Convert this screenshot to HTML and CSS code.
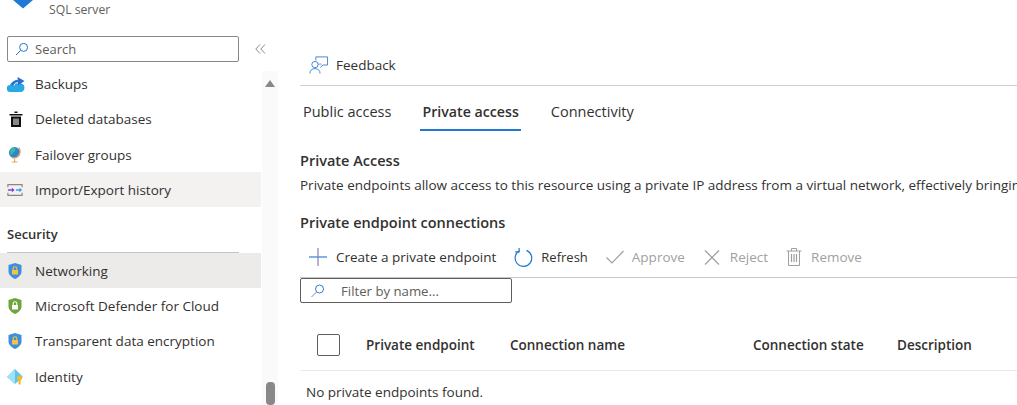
FILE: index.html
```html
<!DOCTYPE html>
<html lang="en">
<head>
<meta charset="utf-8">
<title>Networking</title>
<link rel="stylesheet" href="styles.css">
</head>
<body>
<div class="page">
  <aside class="side">
    <header class="res">
      <svg class="res-logo" width="26" height="9" viewBox="0 0 26 9"><path d="M3 0h20L13 8.500z" fill="#1e78d6"/></svg>
      <span class="res-type">SQL server</span>
    </header>
    <div class="search-row">
      <div class="search">
        <svg width="14" height="14" viewBox="0 0 14 14" fill="none"><circle cx="8.600" cy="5.400" r="4" stroke="#1f78c8"/><path d="M5.600 8.400 1 13" stroke="#1f78c8"/></svg>
        <span>Search</span>
      </div>
      <svg class="collapse" width="11" height="10" viewBox="0 0 11 10" fill="none" stroke="#8a8886"><path d="M5 .5.800 5 5 9.500M10 .5 5.800 5 10 9.500"/></svg>
    </div>
    <div class="nav-wrap">
      <nav class="nav">
        <a class="item">
          <svg class="ico" width="18" height="15" viewBox="0 0 18 15"><path d="M3.500 15a3.500 3.500 0 0 1-.5-7A5 5 0 0 1 9 4.500 4.500 4.500 0 0 1 14 6.500 4.300 4.300 0 0 1 13.500 15z" fill="#29a8e4"/><path d="M5.500 8.500a4.500 4.500 0 0 1 6-4" stroke="#2a6fc9" stroke-width="2.600" fill="none"/><path d="M10.500 0 17.500 4 11 8.500z" fill="#2a6fc9"/><path d="M7 8.500a3 3 0 0 1 4-2.500" stroke="#fff" fill="none"/></svg>
          <span>Backups</span>
        </a>
        <a class="item">
          <svg class="ico ico-trash" width="14" height="16" viewBox="0 0 14 16"><path d="M.5 3h13v1.600H.5zM5.500 .5h3v1.600h-3z" fill="#111"/><path d="M2 5.500h10V16H2z" fill="#111"/><path d="M5 7.500v6.500M7 7.500v6.500M9 7.500v6.500" stroke="#fff"/></svg>
          <span>Deleted databases</span>
        </a>
        <a class="item">
          <svg class="ico ico-in" width="15" height="17" viewBox="0 0 16 18"><circle cx="7" cy="7" r="6" fill="#2b88c9"/><path d="M3 3c2-2 5-1 5 1S5 7 4 9 1.500 6 3 3z" fill="#3db8a8"/><path d="M11.500 1.500a7 7 0 0 1-7 11M7 14v2.500M4 17h6" stroke="#f0a15a" stroke-width="1.300" fill="none"/></svg>
          <span>Failover groups</span>
        </a>
        <a class="item hover">
          <svg class="ico" width="16" height="14" viewBox="0 0 18 14" fill="none"><path d="M1 4V1h16v3M1 10v3h16v-3" stroke="#8a8886" stroke-width="1.300"/><path d="M1 7h6" stroke="#7b3fd0" stroke-width="1.600"/><path d="M5.500 4.500 8.500 7l-3 2.500z" fill="#7b3fd0"/><path d="M10 7h5.500" stroke="#3b9be8" stroke-width="1.600"/><path d="M14 4.500 17 7l-3 2.500z" fill="#3b9be8"/></svg>
          <span>Import/Export history</span>
        </a>
        <h3 class="group">Security</h3>
        <a class="item active">
          <svg class="ico ico-in" width="14" height="16" viewBox="0 0 14 16"><use href="#shield-blue"/></svg>
          <span>Networking</span>
        </a>
        <a class="item">
          <svg class="ico ico-in" width="14" height="16" viewBox="0 0 14 16"><path d="M7 0 13.500 2v6.500C13.500 12 10 14.500 7 16 4 14.500.5 12 .5 8.500V2z" fill="#6ca63a"/><path d="M4 7h6v4.500H4z" fill="#fff"/><path d="M5.200 7V5.500a1.800 1.800 0 0 1 3.600 0V7" fill="none" stroke="#fff" stroke-width="1.100"/></svg>
          <span>Microsoft Defender for Cloud</span>
        </a>
        <a class="item">
          <svg class="ico ico-in" width="14" height="16" viewBox="0 0 14 16"><use href="#shield-blue"/></svg>
          <span>Transparent data encryption</span>
        </a>
        <a class="item">
          <svg class="ico" width="18" height="16" viewBox="0 0 18 16"><path d="M8 0 16 8l-8 7-8-7z" fill="#5ec4ee"/><path d="M8 0v15L0 8z" fill="#9ee2f7"/><circle cx="12.500" cy="9" r="2.500" fill="#f4b92f"/><path d="M11.500 10h2.200v5.500h-2.200z" fill="#f4b92f"/></svg>
          <span>Identity</span>
        </a>
        <a class="item">
          <svg class="ico" width="16" height="16" viewBox="0 0 16 16"><path d="M1 9h10v7H1z" fill="#605e5c"/></svg>
        </a>
      </nav>
      <div class="scrollbar">
        <div class="arrow"></div>
        <div class="thumb"></div>
      </div>
    </div>
  </aside>
  <main class="main">
    <div class="feedback">
      <svg width="20" height="18" viewBox="0 0 22 20" fill="none"><path d="M7.500 5V1h13v9h-5l-3 2.500" stroke="#2f80d0"/><path d="M10 9h4" stroke="#b56fb0"/><circle cx="6.500" cy="9.500" r="3.500" stroke="#2f80d0"/><path d="M.8 19.500c0-3.500 2.500-5.500 5.700-5.500s5.700 2 5.700 5.500" stroke="#2f80d0"/></svg>
      <span>Feedback</span>
    </div>
    <div class="tabs">
      <a class="tab">Public access</a>
      <a class="tab on">Private access</a>
      <a class="tab tab-last">Connectivity</a>
    </div>
    <h2 class="h-access">Private Access</h2>
    <p class="desc">Private endpoints allow access to this resource using a private IP address from a virtual network, effectively bringing the service into your virtual network.</p>
    <h2 class="h-conn">Private endpoint connections</h2>
    <div class="toolbar">
      <a class="cmd">
        <svg width="18" height="18" viewBox="0 0 18 18" fill="none"><path d="M0 9h18" stroke="#2f80d0" stroke-width="1.200"/><path d="M9 0v18" stroke="#8c7cc0" stroke-width="1.200"/></svg>
        <span>Create a private endpoint</span>
      </a>
      <a class="cmd cmd-refresh">
        <svg width="19" height="19" viewBox="0 0 18 19" fill="none" stroke="#1f78d0" stroke-width="1.200"><path d="M5 2.800A8.300 8.300 0 1 0 12 2.400"/><path d="M4.600 0v3.800H.8"/></svg>
        <span>Refresh</span>
      </a>
      <a class="cmd off cmd-approve">
        <svg width="18" height="14" viewBox="0 0 18 14" fill="none" stroke="#a19f9d" stroke-width="1.200"><path d="M.5 7.500 6 13 17.500 1"/></svg>
        <span>Approve</span>
      </a>
      <a class="cmd off cmd-reject">
        <svg width="16" height="15" viewBox="0 0 15 15" fill="none" stroke="#a19f9d" stroke-width="1.200"><path d="m.5.500 14 14M14.500.500l-14 14"/></svg>
        <span>Reject</span>
      </a>
      <a class="cmd off cmd-remove">
        <svg width="16" height="18" viewBox="0 0 15 18" fill="none" stroke="#a19f9d"><path d="M0 3h15M5 3V.5h5V3M2 3v14.500h11V3"/><path d="M5 6v8M7.500 6v8M10 6v8" stroke-width="1.200"/></svg>
        <span>Remove</span>
      </a>
    </div>
    <div class="filter">
      <svg width="15" height="14" viewBox="0 0 15 14" fill="none"><circle cx="9.500" cy="5" r="4" stroke="#2f80d0"/><path d="M6.500 8 1.500 13" stroke="#8c7cc0"/></svg>
      <span>Filter by name...</span>
    </div>
    <div class="thead">
      <div class="check-cell"><div class="check"></div></div>
      <div>Private endpoint</div>
      <div>Connection name</div>
      <div>Connection state</div>
      <div>Description</div>
    </div>
    <p class="empty">No private endpoints found.</p>
  </main>
</div>
<svg class="defs" width="0" height="0">
  <symbol id="shield-blue" viewBox="0 0 14 16"><path d="M7 0 13.500 2v6.500C13.500 12 10 14.500 7 16 4 14.500.5 12 .5 8.500V2z" fill="#3f8fdc"/><path d="M4 7h6v4.500H4z" fill="#f6c445"/><path d="M5.200 7V5.500a1.800 1.800 0 0 1 3.600 0V7" fill="none" stroke="#f6c445" stroke-width="1.100"/></symbol>
</svg>
</body>
</html>
```

FILE: styles.css
```css
* { box-sizing: border-box; }
html, body { margin: 0; padding: 0; background: #fff; }
body {
  width: 1017px;
  height: 405px;
  overflow: hidden;
  font-family: "Open Sans", "Noto Sans", sans-serif;
  font-size: 13.5px;
  color: #323130;
}
h2, h3, p { margin: 0; }
.defs { display: block; }
.page { display: flex; height: 405px; overflow: hidden; }

.side { width: 277px; flex: none; display: flex; flex-direction: column; }
.res { height: 36px; display: flex; padding-left: 10px; }
.res-logo { flex: none; }
.res-type { margin: 1px 0 0 13px; font-size: 12.2px; line-height: 18px; color: #605e5c; }

.search-row { height: 30px; display: flex; align-items: flex-start; }
.search {
  width: 232px; height: 26px; margin-left: 7px;
  display: flex; align-items: center; gap: 6px; padding-left: 7px;
  border: 1px solid #8a8886; border-radius: 2px; color: #605e5c; font-size: 13px;
}
.collapse { margin: 8px 0 0 16px; }

.nav-wrap { flex: 1; display: flex; min-height: 0; }
.nav { width: 261px; flex: none; }
.item { height: 35.33px; display: grid; grid-template-columns: 28px 1fr; align-items: center; padding: 1px 0 0 7px; }
.ico-in { margin-left: 1px; }
.ico-trash { margin-left: 2px; }
.hover { background: #f3f2f1; }
.active { background: #edebe9; }
.group {
  height: 45.34px; margin: 0 22px 0 7px; padding-top: 17px;
  font-size: 13px; font-weight: 600; line-height: 20px; color: #323130;
  border-bottom: 1px solid #c8c6c4;
}
.scrollbar { width: 16px; flex: none; margin: 5px 0 0 1px; background: #fafafa; display: flex; flex-direction: column; align-items: center; padding-top: 9px; }
.arrow { width: 0; height: 0; border: 5px solid transparent; border-top: 0; border-bottom: 7px solid #8a8886; margin-right: 1px; }
.thumb { width: 9px; flex: 1; margin-top: 295px; border-radius: 4px; background: #8a8886; }

.main { flex: 1; min-width: 0; padding-left: 23px; overflow: hidden; }
.feedback { height: 40px; margin-top: 46px; display: flex; align-items: center; gap: 7px; padding: 0 0 2px 9px; border-bottom: 1px solid #d2d0ce; }
.tabs { display: flex; height: 45px; gap: 27px; padding-left: 1px; }
.tab { height: 45px; line-height: 51px; font-size: 14.5px; padding: 0 2px; }
.tab-last { margin-left: 1px; }
.on { font-size: 14.2px; font-weight: 600; border-bottom: 2px solid #1f78d1; }
.h-access { margin-top: 20px; font-size: 14.5px; font-weight: 600; line-height: 20px; }
.desc { margin-top: 5px; line-height: 18px; white-space: nowrap; }
.h-conn { margin-top: 19px; font-size: 14.5px; font-weight: 600; line-height: 20px; }
.toolbar { height: 45px; display: flex; align-items: center; gap: 18px; padding: 4px 0 0 9px; border-bottom: 1px solid #c8c6c4; }
.cmd { display: flex; align-items: center; gap: 9px; }
.cmd-refresh { gap: 8px; font-size: 13px; }
.cmd-approve { gap: 8px; }
.cmd-reject { gap: 10px; margin-left: 1px; }
.off { color: #a19f9d; }
.filter { width: 212px; height: 25px; display: flex; align-items: center; gap: 16px; padding-left: 9px; border: 1px solid #605e5c; border-radius: 2px; color: #605e5c; font-size: 13.2px; }
.thead {
  height: 68px; padding-top: 17px; display: grid; grid-template-columns: 66px 144px 243px 144px 1fr; align-items: center;
  font-weight: 600; border-bottom: 1px solid #edebe9;
}
.check-cell { padding-left: 17px; }
.check { width: 23px; height: 22px; border: 1px solid #605e5c; border-radius: 2px; }
.empty { margin: 12px 0 0 6px; line-height: 18px; }
```
